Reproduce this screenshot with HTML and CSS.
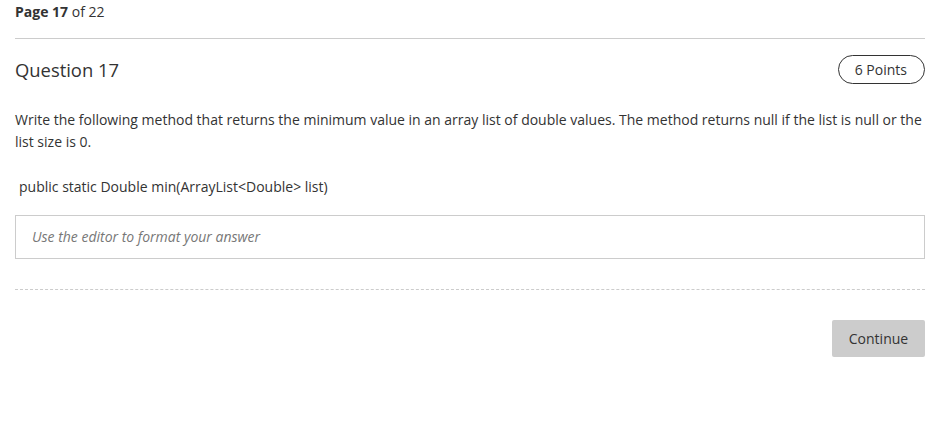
FILE: index.html
```html
<!DOCTYPE html>
<html>
<head>
<meta charset="utf-8">
<link rel="stylesheet" href="styles.css">
</head>
<body>
<div class="page">
  <div class="pager"><b>Page 17</b> of 22</div>
  <div class="qhead">
    <h2 class="qtitle">Question 17</h2>
    <span class="points">6 Points</span>
  </div>
  <p class="prompt">Write the following method that returns the minimum value in an array list of double values. The method returns null if the list is null or the list size is 0.</p>
  <p class="sig">public static Double min(ArrayList&lt;Double&gt; list)</p>
  <div class="editor">Use the editor to format your answer</div>
  <div class="sep"></div>
  <div class="actions"><button class="continue">Continue</button></div>
</div>
</body>
</html>
```
FILE: styles.css
```css
html, body { margin: 0; padding: 0; background: #fff; }
body { font-family: "Open Sans", "Liberation Sans", sans-serif; color: #333; }
.page { padding: 0 23px 0 15px; }
.pager { font-size: 14px; line-height: 20px; padding-top: 2px; padding-bottom: 16px; border-bottom: 1px solid #ccc; color: #333; }
.pager b { font-weight: 700; }
.qhead { display: flex; justify-content: space-between; align-items: center; margin-top: 16px; height: 29px; }
.qtitle { margin: 0; font-size: 18.4px; font-weight: 400; line-height: 29px; color: #333; }
.points { border: 1px solid #333; border-radius: 15px; height: 29px; box-sizing: border-box; padding: 0 17px 0 16px; font-size: 14px; line-height: 27px; color: #333; }
.prompt { margin: 25px 0 0; font-size: 14px; line-height: 22px; color: #333; }
.sig { margin: 23px 0 0; padding-left: 4px; font-size: 14px; line-height: 22px; }
.editor { margin-top: 17px; border: 1px solid #ccc; height: 44px; box-sizing: border-box; padding: 0 16px; font-size: 14px; line-height: 42px; font-style: italic; color: #777; }
.sep { margin-top: 30px; border-top: 1px dashed #ccc; }
.actions { display: flex; justify-content: flex-end; margin-top: 30px; }
.continue { background: #ccc; border: none; border-radius: 2px; font-family: inherit; font-size: 14px; color: #333; width: 93px; height: 37px; padding: 0; }
```
